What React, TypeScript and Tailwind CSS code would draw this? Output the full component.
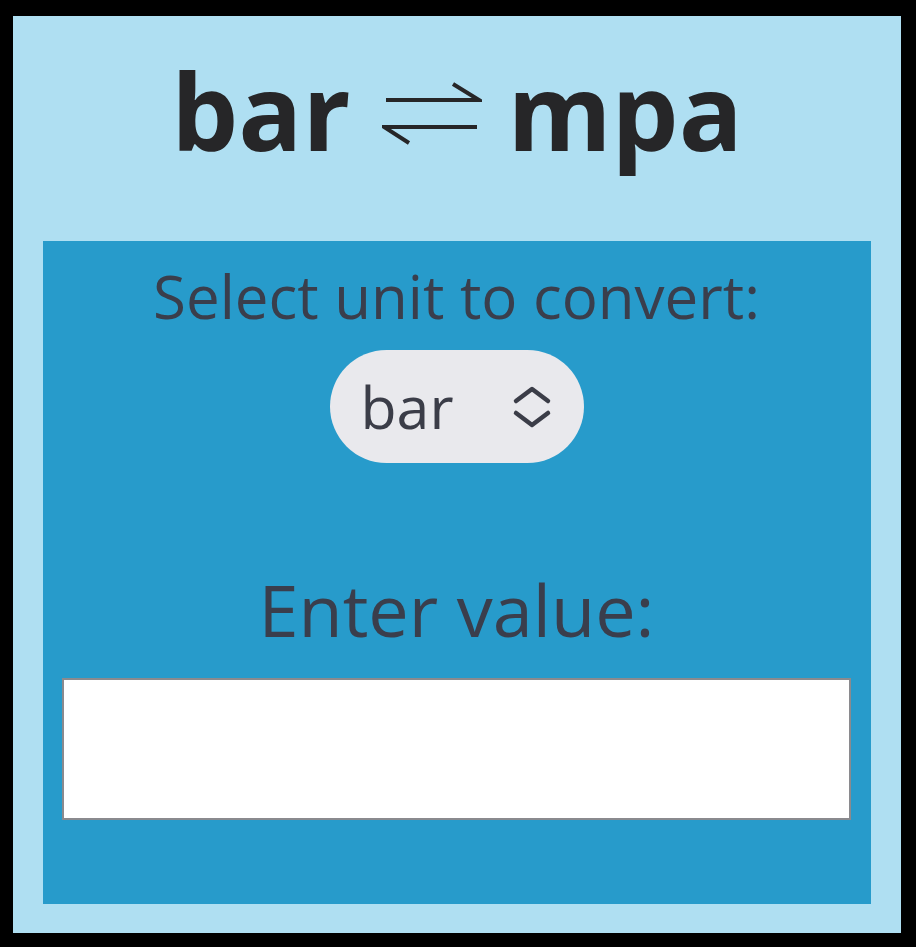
export default function App() {
  return (
    <div
      className="flex h-[947px] w-[916px] bg-black pb-[14px] pl-[13px] pr-[15px] pt-[16px]"
      style={{ fontFamily: '"Open Sans", "DejaVu Sans", sans-serif' }}
    >
      <div className="flex flex-1 flex-col bg-[#afdff2] px-[30px] pb-[29px]">
        {/* Title */}
        <h1 className="mt-[41px] flex items-start justify-center text-[106px] font-bold leading-none text-[#262628]">
          <span>bar</span>
          <svg
            role="img"
            aria-label="⇌"
            className="ml-[31px] mr-[26px] mt-[23px]"
            width="100"
            height="66"
            viewBox="0 0 100 66"
            fill="none"
            stroke="#262628"
            strokeWidth="4"
            strokeLinecap="butt"
          >
            <path d="M4 20 H97 L71 4" />
            <path d="M95 47 H2 L27 63" />
          </svg>
          <span>mpa</span>
        </h1>

        {/* Converter panel */}
        <div className="mt-[78px] flex flex-1 flex-col items-center bg-[#279bcb] pl-[19px] pr-[20px] pt-[25px]">
          <label className="text-[60px] leading-none text-[#3a3e4c]">
            Select unit to convert:
          </label>

          <div className="mt-[24px] flex h-[113px] w-[254px] items-center justify-between rounded-full bg-[#e9e9ed] pl-[31px] pr-[32px]">
            <span className="text-[59px] leading-none text-[#3b3d48]">bar</span>
            <svg
              width="40"
              height="46"
              viewBox="0 0 40 46"
              fill="none"
              stroke="#3b3d48"
              strokeWidth="4.5"
              strokeLinecap="round"
              strokeLinejoin="round"
            >
              <path d="M4 17 L20 5 L36 17" />
              <path d="M4 29 L20 41 L36 29" />
            </svg>
          </div>

          <label className="mt-[110px] text-[72px] leading-none text-[#3a3e4c]">
            Enter value:
          </label>

          <input
            type="text"
            className="mt-[33px] h-[142px] w-full border-2 border-[#8a8a8e] bg-white outline-none"
          />
        </div>
      </div>
    </div>
  );
}
